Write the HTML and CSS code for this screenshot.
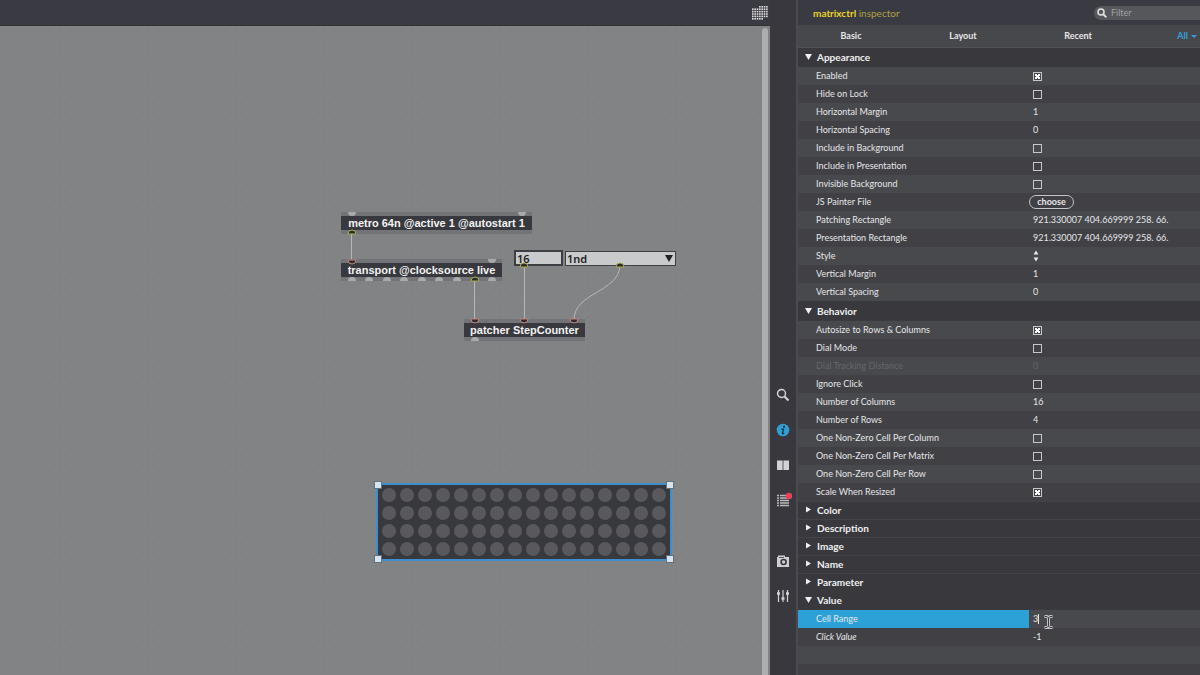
FILE: index.html
```html
<!DOCTYPE html>
<html lang="en">
<head>
<meta charset="utf-8">
<title>matrixctrl inspector</title>
<link rel="stylesheet" href="styles.css">
<script src="app.js" defer></script>
</head>
<body>
<div class="app">
  <main class="patcher">
    <header class="topbar">
      <button class="icon-button" aria-label="Grid">
        <svg width="16" height="16" viewBox="0 0 16 16" fill="#dededf" id="grid-icon"></svg>
      </button>
    </header>
    <div class="workspace">
      <div class="canvas">
        <svg class="cords" id="cords" aria-hidden="true"></svg>
        <div class="object object-metro">metro 64n @active 1 @autostart 1</div>
        <div class="object object-transport">transport @clocksource live</div>
        <div class="object object-counter">patcher StepCounter</div>
        <input class="number" aria-label="Steps" value="16">
        <select class="menu" aria-label="Interval"><option>1nd</option></select>
        <svg class="menu-arrow" width="8" height="7" viewBox="0 0 8 7" aria-hidden="true"><path d="M0 0h8L4 7z" fill="#222226"/></svg>
        <div class="matrix" id="matrix">
          <i class="handle handle-tl"></i><i class="handle handle-tr"></i><i class="handle handle-bl"></i><i class="handle handle-br"></i>
        </div>
        <svg class="cords" id="ports" aria-hidden="true"></svg>
      </div>
      <div class="scrollbar"></div>
    </div>
  </main>
  <nav class="tools" aria-label="Sidebar">
    <button class="icon-button" aria-label="Search"><svg width="14" height="14" viewBox="0 0 14 14" fill="none" stroke="#d8d8da"><circle cx="5.5" cy="5.5" r="4" stroke-width="1.4"/><path d="M8.5 8.5l4 4" stroke-width="2"/></svg></button>
    <button class="icon-button" aria-label="Inspector"><svg width="14" height="14" viewBox="0 0 14 14"><circle cx="7" cy="7" r="6.3" fill="#2f9fd6"/><circle cx="8" cy="3.700" r="1.100" fill="#27303a"/><path d="M5.200 6.100h2.300L6.400 10.500h1.800" fill="none" stroke="#27303a" stroke-width="1.300"/></svg></button>
    <button class="icon-button" aria-label="Reference"><svg width="14" height="14" viewBox="0 0 14 14"><path d="M1 2.500h5.600v9.500H1zM7.400 2.500H13v9.500H7.400z" fill="#d2d2d4"/></svg></button>
    <button class="icon-button" aria-label="Console"><svg width="18" height="16" viewBox="0 0 18 16"><path d="M3 3.500h2M6 3.500h6M3 6h2M6 6h9M3 8.500h2M6 8.500h9M3 11h2M6 11h9M3 13.500h2M6 13.500h9" stroke="#b9b9bd" stroke-width="1.300"/><circle cx="15" cy="4" r="3.300" fill="#e9405c"/></svg></button>
    <button class="icon-button tools-lower" aria-label="Snapshots"><svg width="14" height="14" viewBox="0 0 14 14"><path d="M1 3h1V1.500h7V3h4v10H1z" fill="#cfcfd2"/><path d="M3 3.500h5" stroke="#55555b"/><circle cx="7.600" cy="8" r="2.500" fill="#cfcfd2" stroke="#35353a" stroke-width="1.600"/></svg></button>
    <button class="icon-button" aria-label="Parameters"><svg width="14" height="14" viewBox="0 0 14 14" fill="none" stroke="#d2d2d5"><path d="M2.500 1v12M7 1v12M11.500 1v12" stroke-width="1.200"/><path d="M1 4.500h3M5.500 9.500h3M10 4.500h3" stroke-width="2.400"/></svg></button>
  </nav>
  <aside class="inspector">
    <header class="inspector-head">
      <h1 class="title"><b>matrixctrl</b> inspector</h1>
      <label class="filter">
        <svg width="10" height="10" viewBox="0 0 10 10" fill="none" stroke="#e2e2e4"><circle cx="4" cy="4" r="3" stroke-width="1.500"/><path d="M6.200 6.200L9.300 9.300" stroke-width="1.900"/></svg>
        <input class="filter-input" placeholder="Filter" aria-label="Filter">
      </label>
    </header>
    <div class="tabs">
      <button class="tab">Basic</button>
      <button class="tab">Layout</button>
      <button class="tab">Recent</button>
      <button class="tab tab-active">All<span class="tab-caret"></span></button>
    </div>
    <div class="sections" id="sections"></div>
  </aside>
</div>
<svg class="cursor" width="9" height="14" viewBox="0 0 9 14" fill="none" aria-hidden="true"><path d="M.5 1.500h2.500l1.500 1.500L6 1.500h2.500M4.500 3v8M.5 12.500h2.500L4.500 11 6 12.500h2.500" stroke="#c0c0c4" stroke-width="3"/><path d="M1 1.500h2l1.500 1.500L6 1.500h2M4.500 3v8M1 12.500h2L4.500 11 6 12.500h2" stroke="#3a3a3f"/></svg>
</body>
</html>
```
FILE: styles.css
```css
* { box-sizing: border-box; }
body { margin: 0; background: #3a3a41; color: #e6e6e8; font: 9px/18px Lato, "Open Sans", sans-serif; }
button, input, select { margin: 0; padding: 0; border: 0; background: none; color: inherit; font: inherit; }
.app { display: flex; height: 100vh; overflow: hidden; }
.patcher { flex: 1; min-width: 0; display: flex; flex-direction: column; }
.topbar { height: 26px; flex: none; display: flex; align-items: center; justify-content: flex-end; padding-right: 2px; background: #3a3a42; border-bottom: 1px solid #333336; }
.icon-button { display: grid; place-items: center; flex: none; }
.icon-button svg, .filter svg { display: block; }
.workspace { flex: 1; display: flex; min-height: 0; background: #818385; }
.canvas { position: relative; flex: 1; min-width: 0; overflow: hidden; background-image: radial-gradient(circle, #7c7e80 1px, transparent 1px); background-size: 11px 11px; }
.scrollbar { width: 6px; margin: 2px 2px 0 0; border-radius: 3px 3px 0 0; background: #acadae; }
.cords { position: absolute; left: 0; top: 0; width: 100%; height: 100%; pointer-events: none; }

.object { position: absolute; height: 22px; border: solid #737477; border-width: 4px 0; background: #38393e; background-clip: padding-box; color: #f2f2f2; font: bold 11px/14px "Liberation Sans", Arial, sans-serif; text-align: center; white-space: nowrap; }
.object-metro { left: 341px; top: 186px; width: 191px; }
.object-transport { left: 341px; top: 233px; width: 161px; }
.object-counter { left: 464px; top: 293px; width: 121px; }
.number, .menu { position: absolute; background: #c9cacb; color: #222226; font: 600 11px/12px "Noto Sans", "Open Sans", sans-serif; appearance: none; border-radius: 0; }
.number { left: 514px; top: 224px; width: 49px; height: 16px; border: 2px solid #3e3f44; padding-left: 1px; }
.menu { left: 565px; top: 225px; width: 111px; height: 15px; border: 1px solid #3e3f44; padding-left: 1px; }
.menu-arrow { position: absolute; left: 665px; top: 229px; pointer-events: none; }
.matrix { position: absolute; left: 376px; top: 457px; width: 296px; height: 78px; padding: 1px 2px; border: 2px solid #3d90cd; background: #38393e; display: grid; grid-template-columns: repeat(16, 1fr); grid-template-rows: repeat(4, 1fr); place-items: center; }
.cell { width: 14px; height: 14px; border-radius: 50%; background: #59595d; }
.handle { position: absolute; width: 8px; height: 8px; background: #d5e4ef; border: 1px solid #65727c; }
.handle-tl { left: -4px; top: -4px; }
.handle-tr { right: -4px; top: -4px; }
.handle-bl { left: -4px; bottom: -4px; }
.handle-br { right: -4px; bottom: -4px; }

.tools { width: 26px; flex: none; display: flex; flex-direction: column; align-items: center; gap: 19px; padding-top: 387px; background: #38383e; }
.tools .icon-button { width: 22px; height: 16px; }
.tools-lower { margin-top: 26px; }

.inspector { width: 404px; flex: none; border-left: 2px solid #4a4b50; background: #3a3a3f; overflow: hidden; }
.inspector-head { height: 25px; display: flex; align-items: center; justify-content: space-between; padding-left: 15px; background: #3a3a42; }
.title { margin: 0; font-size: 10px; font-weight: normal; color: #b0a044; }
.title b { color: #ead22b; }
.filter { width: 106px; height: 14px; display: flex; align-items: center; gap: 4px; padding-left: 3px; border-radius: 7px 0 0 7px; background: #56575b; }
.filter-input { flex: 1; min-width: 0; height: 14px; outline: 0; }
.filter-input::placeholder { color: #a0a0a4; opacity: 1; }
.tabs { height: 23px; display: grid; grid-template-columns: 106px 118px 112px 1fr; background: #47484c; border-bottom: 1px solid #515256; }
.tab { text-align: center; font-weight: bold; }
.tab-active { display: flex; align-items: center; justify-content: flex-end; gap: 3px; padding-right: 3px; color: #35a0d8; }
.tab-caret { border: solid transparent; border-width: 3px 3px 0; border-top-color: #35a0d8; }
.section-head { display: flex; align-items: center; width: 100%; height: 18px; padding: 0 0 1px 7px; gap: 5px; font-size: 10px; line-height: 16px; font-weight: bold; text-align: left; color: #f0f0f1; background: #38383d; }
.section-head svg { width: 7px; height: 7px; }
.closed { box-shadow: inset 0 1px #434348; }
.rows { padding-top: 1px; }
.rows-spaced { padding-bottom: 1px; }
.row { display: grid; grid-template-columns: 231px 1fr; height: 18px; background: #404045; }
.row:nth-child(odd) { background: #48494d; }
.row-label { padding-left: 18px; }
.row-value { display: flex; align-items: center; padding-left: 4px; }
.disabled { color: #65656a; }
.italic .row-label { font-style: italic; }
.selected .row-label { background: #2ba1d8; }
.value-input { width: 160px; height: 18px; outline: 0; }
.check { appearance: none; width: 9px; height: 9px; border: 1px solid #c7c7ca; }
.check:checked { background: linear-gradient(45deg, transparent 34%, #fff 34% 66%, transparent 66%) center / 5px 5px no-repeat, linear-gradient(-45deg, transparent 34%, #fff 34% 66%, transparent 66%) center / 5px 5px no-repeat; }
.choose { height: 14px; width: 45px; margin-left: -4px; border: 1px solid #c5c5c8; border-radius: 7px; font-weight: bold; line-height: 12px; }
.stepper-button { display: grid; place-items: center; }
.stepper { width: 6px; height: 12px; }
.cursor { position: absolute; left: 1044px; top: 615px; pointer-events: none; }
.caret { width: 1px; height: 10px; background: #e6e6e8; }
.selected .value-input { width: 5px; }
```
FILE: app.js
```js
const sections = [
  ['Appearance', [
    ['Enabled', true], ['Hide on Lock', false], ['Horizontal Margin', '1'], ['Horizontal Spacing', '0'],
    ['Include in Background', false], ['Include in Presentation', false], ['Invisible Background', false],
    ['JS Painter File', 'choose'], ['Patching Rectangle', '921.330007 404.669999 258. 66.'],
    ['Presentation Rectangle', '921.330007 404.669999 258. 66.'], ['Style', 'stepper'],
    ['Vertical Margin', '1'], ['Vertical Spacing', '0']], 'rows-spaced'],
  ['Behavior', [
    ['Autosize to Rows & Columns', true], ['Dial Mode', false], ['Dial Tracking Distance', '0', 'disabled'],
    ['Ignore Click', false], ['Number of Columns', '16'], ['Number of Rows', '4'],
    ['One Non-Zero Cell Per Column', false], ['One Non-Zero Cell Per Matrix', false],
    ['One Non-Zero Cell Per Row', false], ['Scale When Resized', true]]],
  ['Color'], ['Description'], ['Image'], ['Name'], ['Parameter'],
  ['Value', [['Cell Range', '3', 'selected'], ['Click Value', '-1', 'italic'], ['', null], ['', null]]]
];

function control(value, id, state) {
  if (value === null) return '';
  if (typeof value === 'boolean') return `<input type="checkbox" class="check" id="${id}"${value ? ' checked' : ''}>`;
  if (value === 'choose') return `<button class="choose" id="${id}">choose</button>`;
  if (value === 'stepper') return `<button class="stepper-button" id="${id}" aria-label="Style"><svg class="stepper" viewBox="0 0 6 12" fill="#e6e6e8"><path d="M3 .5l2.500 4h-5zM3 11.500L.5 7.500h5z"/></svg></button>`;
  return `<input class="value-input" id="${id}" value="${value}"${state === 'disabled' ? ' disabled' : ''}>${state === 'selected' ? '<span class="caret"></span>' : ''}`;
}

document.getElementById('sections').innerHTML = sections.map(([name, rows, extra], s) => {
  const arrow = rows ? 'M0 1h7L3.500 7z' : 'M1 .5L6 3.500 1 6.500z';
  const body = rows ? `<div class="rows ${extra || ''}">` + rows.map(([label, value, state], r) => {
    const id = `field-${s}-${r}`;
    const caption = value === null ? '<span></span>' : `<label class="row-label" for="${id}">${label.replace('&', '&amp;')}</label>`;
    return `<div class="row ${state || ''}">${caption}<div class="row-value">${control(value, id, state)}</div></div>`;
  }).join('') + '</div>' : '';
  return `<section><button class="section-head${rows ? '' : ' closed'}"><svg viewBox="0 0 7 7"><path d="${arrow}" fill="#f0f0f1"/></svg>${name}</button>${body}</section>`;
}).join('');

document.getElementById('matrix').insertAdjacentHTML('beforeend', '<span class="cell"></span>'.repeat(64));

let dots = '';
for (let y = 0; y < 6; y++) {
  for (let x = 0; x < 7; x++) {
    if ((y === 0 && x < 3) || (y === 5 && x > 4)) continue;
    dots += `<rect x="${x * 2.35}" y="${1 + y * 2.4}" width="1.600" height="1.600"/>`;
  }
}
document.getElementById('grid-icon').innerHTML = dots;

document.getElementById('cords').innerHTML =
  '<g fill="none" stroke="#b6b7b8"><path d="M351.500 208v27M474.500 255v39M524.500 240v54M620 240C618 267 574 266 574 294"/></g>';

const inlet = (x, y, fill, stroke) => `<path d="M${x - 4} ${y}a4 4 0 0 0 8 0z" fill="${fill}" stroke="${stroke}"/>`;
const outlet = (x, y, fill, stroke) => `<path d="M${x - 4} ${y}a4 4 0 0 1 8 0z" fill="${fill}" stroke="${stroke}"/>`;
const idle = (draw, list, y) => list.map(x => draw(x, y, '#a9aaac', 'none')).join('');
document.getElementById('ports').innerHTML =
  idle(inlet, [352, 522], 186) + idle(inlet, [492], 233) +
  idle(outlet, [352, 369, 387, 404, 422, 439, 457, 492], 255) + idle(outlet, [475], 315) +
  [[352, 234], [475, 293], [524, 293], [574, 293]].map(([x, y]) => inlet(x, y, '#2d2d31', '#c5837d')).join('') +
  [[352, 208], [475, 255], [524, 241], [620, 241]].map(([x, y]) => outlet(x, y, '#2d2d31', '#a8ab4d')).join('');
```
